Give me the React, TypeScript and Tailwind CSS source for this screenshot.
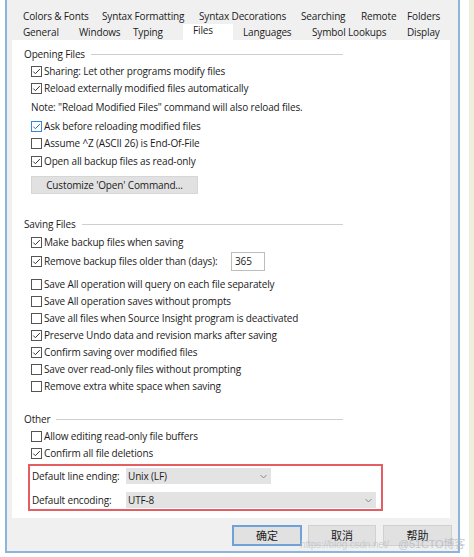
import React from "react";

function Cb({ checked, blue }: { checked?: boolean; blue?: boolean }) {
  return (
    <span
      className={
        blue
          ? "w-[11px] h-[11px] border border-[#3c88d8] bg-white flex items-center justify-center shrink-0"
          : "w-[11px] h-[11px] border border-[#555] bg-white flex items-center justify-center shrink-0"
      }
    >
      {checked && (
        <svg width="9" height="9" viewBox="0 0 9 9">
          <path d="M1.3 4.6 L3.4 6.7 L7.8 2.1" fill="none" stroke={blue ? "#2b6cb5" : "#333"} strokeWidth="1" />
        </svg>
      )}
    </span>
  );
}

function Row({ text, checked, blue, className }: { text: string; checked?: boolean; blue?: boolean; className?: string }) {
  return (
    <div className={"h-[17px] flex items-center pl-[19px] " + (className ?? "")}>
      <Cb checked={checked} blue={blue} />
      <span className="ml-[2px] whitespace-nowrap">{text}</span>
    </div>
  );
}

function Heading({ text, className }: { text: string; className?: string }) {
  return (
    <div className={"h-[17px] w-[331px] flex items-center pl-[12px] " + (className ?? "")}>
      <span className="whitespace-nowrap">{text}</span>
      <div className="ml-[6px] h-px bg-[#cfcfcf] flex-1" />
    </div>
  );
}

function Chevron() {
  return (
    <svg width="7" height="5" viewBox="0 0 7 5">
      <path d="M0.5 1 L3.5 4 L6.5 1" fill="none" stroke="#888" strokeWidth="1" />
    </svg>
  );
}

export default function App() {
  const tab = "h-[16px] flex items-center whitespace-nowrap shrink-0";
  return (
    <div className="w-[474px] h-[557px] bg-white flex font-['Open_Sans',sans-serif] text-[10px] tracking-[-0.15px] text-[#1b1b1b] relative overflow-hidden">
      <div className="ml-[5px] w-[455px] h-[553px] border-l-2 border-r-2 border-b-2 border-[#8db4dc] bg-[#f0f0f0] flex flex-col">
        {/* tabs */}
        <div className="ml-[5px] mt-[8px] flex flex-col">
          <div className="flex">
            <div className={tab + " w-[84px] pl-[11px]"}>Colors &amp; Fonts</div>
            <div className={tab + " w-[97px] pl-[6px]"}>Syntax Formatting</div>
            <div className={tab + " w-[102px] pl-[6px]"}>Syntax Decorations</div>
            <div className={tab + " w-[60px] pl-[6px]"}>Searching</div>
            <div className={tab + " w-[46px] pl-[6px]"}>Remote</div>
            <div className={tab + " w-[49px] pl-[6px]"}>Folders</div>
          </div>
          <div className="flex">
            <div className={tab + " w-[58px] pl-[11px]"}>General</div>
            <div className={tab + " w-[58px] pl-[9px]"}>Windows</div>
            <div className={tab + " w-[55px] pl-[5px]"}>Typing</div>
            <div className="h-[16px] w-[50px] pl-[10px] bg-white flex items-start whitespace-nowrap shrink-0 leading-[13px]">Files</div>
            <div className={tab + " w-[67px] pl-[10px]"}>Languages</div>
            <div className={tab + " w-[98px] pl-[12px]"}>Symbol Lookups</div>
            <div className={tab + " w-[52px] pl-[9px]"}>Display</div>
          </div>
        </div>
        {/* panel */}
        <div className="ml-[5px] w-[438px] h-[478px] bg-white flex flex-col pt-[6px]">
          <Heading text="Opening Files" />
          <Row text="Sharing: Let other programs modify files" checked />
          <Row text="Reload externally modified files automatically" checked />
          <div className="h-[17px] mt-[2px] flex items-center pl-[19px] whitespace-nowrap">
            Note: "Reload Modified Files" command will also reload files.
          </div>
          <Row text="Ask before reloading modified files" checked blue className="mt-[2px]" />
          <Row text="Assume ^Z (ASCII 26) is End-Of-File" />
          <Row text="Open all backup files as read-only" checked className="mt-[1px]" />
          <div className="ml-[19px] mt-[6px] w-[167px] h-[18px] bg-[#e1e1e1] border border-[#d6d6d6] flex items-center justify-center whitespace-nowrap">
            Customize 'Open' Command...
          </div>

          <Heading text="Saving Files" className="mt-[22px]" />
          <Row text="Make backup files when saving" checked className="mt-[1px]" />
          <div className="h-[20px] flex items-center pl-[19px]">
            <Cb checked />
            <span className="ml-[2px] whitespace-nowrap">Remove backup files older than (days):</span>
            <div className="ml-auto mr-[185px] w-[34px] h-[19px] border border-[#bdbdbd] bg-white flex items-center pl-[3px]">365</div>
          </div>
          <Row text="Save All operation will query on each file separately" className="mt-[5px]" />
          <Row text="Save All operation saves without prompts" />
          <Row text="Save all files when Source Insight program is deactivated" />
          <Row text="Preserve Undo data and revision marks after saving" checked />
          <Row text="Confirm saving over modified files" checked />
          <Row text="Save over read-only files without prompting" />
          <Row text="Remove extra white space when saving" />

          <Heading text="Other" className="mt-[16px]" />
          <Row text="Allow editing read-only file buffers" />
          <Row text="Confirm all file deletions" checked />
          <div className="ml-[16px] mt-[2px] w-[355px] h-[47px] border-2 border-[#e35d63] flex flex-col pt-[2px] pl-[2px]">
            <div className="h-[16px] flex items-center">
              <span className="w-[94px] whitespace-nowrap">Default line ending:</span>
              <div className="w-[145px] h-[16px] bg-[#e3e3e3] flex items-center pl-[2px] pr-[4px]">
                <span className="flex-1">Unix (LF)</span>
                <Chevron />
              </div>
            </div>
            <div className="h-[16px] mt-[8px] flex items-center">
              <span className="w-[94px] whitespace-nowrap">Default encoding:</span>
              <div className="w-[250px] h-[16px] bg-[#e3e3e3] flex items-center pl-[2px] pr-[4px]">
                <span className="flex-1">UTF-8</span>
                <Chevron />
              </div>
            </div>
          </div>
        </div>
        {/* buttons */}
        <div className="mt-[7px] flex justify-end pr-[6px] font-['Noto_Sans_CJK_SC',sans-serif] text-[11px] tracking-normal">
          <div className="w-[70px] h-[21px] bg-[#e1e1e1] border-2 border-[#6ea2d8] flex items-center justify-center">确定</div>
          <div className="ml-[6px] w-[68px] h-[21px] bg-[#e1e1e1] border border-[#d0d0d0] flex items-center justify-center">取消</div>
          <div className="ml-[7px] w-[69px] h-[21px] bg-[#e1e1e1] border border-[#d0d0d0] flex items-center justify-center">帮助</div>
        </div>
      </div>
      <div className="ml-auto w-[5px] h-full bg-[#eef0dc]" />
      <div className="absolute left-[300px] top-[537px] text-[10px] text-[#b8bcc4] opacity-60 whitespace-nowrap font-['Liberation_Sans',sans-serif]">
        https://blog.csdn.net/
      </div>
      <div className="absolute left-[398px] top-[536px] text-[11px] text-[#b0b4bc] opacity-70 whitespace-nowrap font-['Liberation_Sans','Noto_Sans_CJK_SC',sans-serif]">
        @51CTO博客
      </div>
    </div>
  );
}
